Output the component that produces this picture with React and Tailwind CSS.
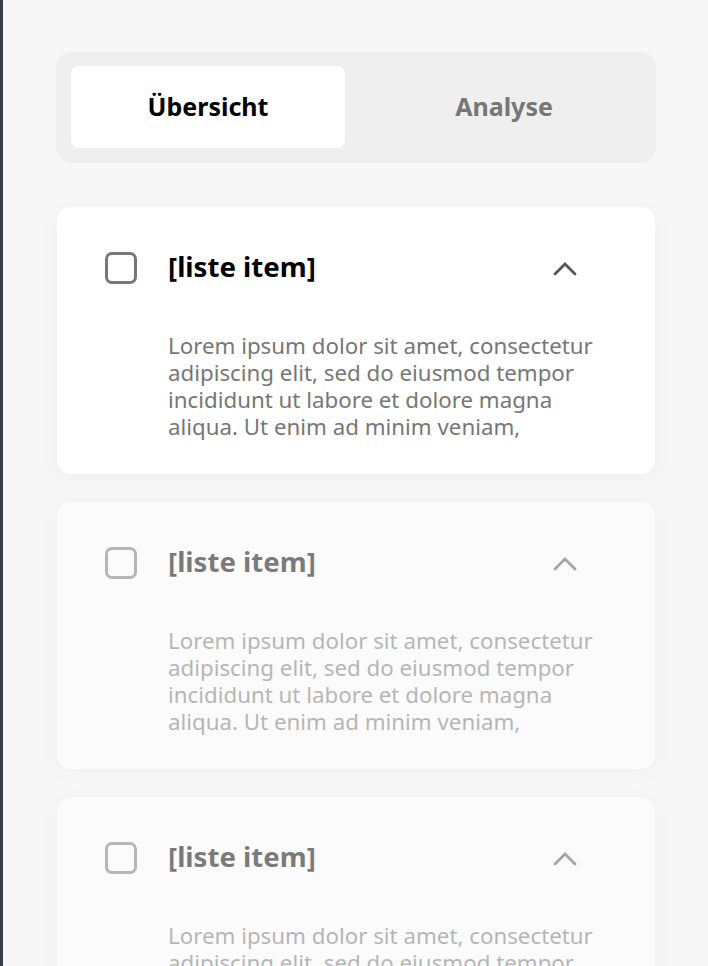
import React, { useState } from "react";

const items = [
  { id: 1, title: "[liste item]", active: true },
  { id: 2, title: "[liste item]", active: false },
  { id: 3, title: "[liste item]", active: false },
];

const body =
  "Lorem ipsum dolor sit amet, consectetur adipiscing elit, sed do eiusmod tempor incididunt ut labore et dolore magna aliqua. Ut enim ad minim veniam,";

const Chevron = () => (
  <svg width="24" height="15" viewBox="0 0 24 15" fill="none" className="text-[#555]">
    <polyline
      points="2,13 12,3 22,13"
      stroke="currentColor"
      strokeWidth="2.8"
      strokeLinecap="round"
      strokeLinejoin="miter"
    />
  </svg>
);

const ListCard = ({ title, active }) => (
  <div
    className={`w-[598px] ml-px rounded-[14px] bg-white pt-[45px] pb-[34px] pl-[48px] pr-[78px] shadow-[0_4px_18px_rgba(0,0,0,0.045)] ${
      active ? "" : "opacity-50"
    }`}
  >
    <div className="flex items-center h-8">
      <div className="w-8 h-8 rounded-[7px] border-[3px] border-[#777] shrink-0" />
      <span className="ml-[31px] flex-1 text-[27.6px] font-bold text-black leading-none -mt-[3px]">
        {title}
      </span>
      <Chevron />
    </div>
    <p className="mt-[48px] ml-[63px] text-[22.3px] leading-[27px] text-[#777] w-[445px]">{body}</p>
  </div>
);

export default function App() {
  const [tab, setTab] = useState("overview");

  return (
    <div
      className="min-h-screen h-[966px] overflow-hidden bg-[#f7f7f7] border-l-[3px] border-[#3a3f47] pl-[53px] pt-[52px]"
      style={{ fontFamily: '"Noto Sans", "Open Sans", sans-serif' }}
    >
      <div className="w-[600px] rounded-[16px] bg-[#efefef] pt-[14px] pb-[15px] px-[15px] flex gap-[22px]">
        <button
          onClick={() => setTab("overview")}
          className={`flex-1 h-[82px] rounded-[8px] text-[25px] font-bold ${
            tab === "overview" ? "bg-white text-black" : "text-[#777]"
          }`}
        >
          Übersicht
        </button>
        <button
          onClick={() => setTab("analyse")}
          className={`flex-1 h-[82px] rounded-[8px] text-[25px] font-bold ${
            tab === "analyse" ? "bg-white text-black" : "text-[#777]"
          }`}
        >
          Analyse
        </button>
      </div>

      <div className="mt-[44px] flex flex-col gap-[28px]">
        {items.map((it) => (
          <ListCard key={it.id} title={it.title} active={it.active} />
        ))}
      </div>
    </div>
  );
}
